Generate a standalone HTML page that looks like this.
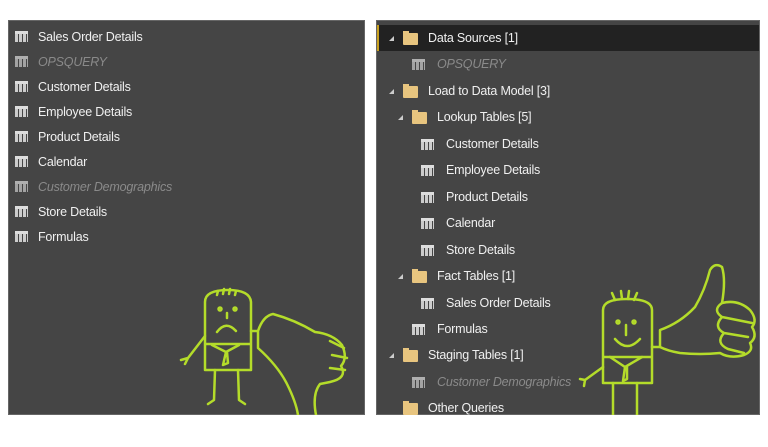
<!DOCTYPE html><html><head><style>
body{margin:0;width:768px;height:447px;background:#fff;position:relative;overflow:hidden;font-family:"Liberation Sans",sans-serif;}
.p{position:absolute;background:#454545;}
.r{position:absolute;height:20px;line-height:20px;font-size:12.5px;color:#f0f0f0;white-space:nowrap;letter-spacing:-0.2px;}
.r.i{color:#8a8a8a;font-style:italic;}
.t{position:absolute;width:13px;height:11px;background:
linear-gradient(#ddd,#ddd) 0 0/13px 3px no-repeat,
repeating-linear-gradient(90deg,#ccc 0 3px,#454545 3px 4px) 0 3px/13px 8px no-repeat;}
.f{position:absolute;width:15px;height:12px;background:#e8c57f;border-radius:1px;}
.f:before{content:"";position:absolute;left:0;top:-2px;width:6px;height:3px;background:#e8c57f;}
.a{position:absolute;width:0;height:0;border-left:5px solid transparent;border-bottom:5px solid #ccc;}
</style></head><body>
<div class="p" style="left:8px;top:20px;width:357px;height:395px;border:1px solid #666;box-sizing:border-box"></div>
<div class="p" style="left:376px;top:20px;width:384px;height:395px;border:1px solid #666;box-sizing:border-box"></div>

<div class="t" style="left:15px;top:31px"></div><div class="r" style="left:38px;top:27px">Sales Order Details</div>
<div class="t" style="left:15px;top:56px;opacity:.7"></div><div class="r i" style="left:38px;top:52px">OPSQUERY</div>
<div class="t" style="left:15px;top:81px"></div><div class="r" style="left:38px;top:77px">Customer Details</div>
<div class="t" style="left:15px;top:106px"></div><div class="r" style="left:38px;top:102px">Employee Details</div>
<div class="t" style="left:15px;top:131px"></div><div class="r" style="left:38px;top:127px">Product Details</div>
<div class="t" style="left:15px;top:156px"></div><div class="r" style="left:38px;top:152px">Calendar</div>
<div class="t" style="left:15px;top:181px;opacity:.7"></div><div class="r i" style="left:38px;top:177px">Customer Demographics</div>
<div class="t" style="left:15px;top:206px"></div><div class="r" style="left:38px;top:202px">Store Details</div>
<div class="t" style="left:15px;top:231px"></div><div class="r" style="left:38px;top:227px">Formulas</div>

<div style="position:absolute;left:377px;top:25px;width:382px;height:26px;background:#222"></div>
<div style="position:absolute;left:377px;top:25px;width:2px;height:26px;background:#c8a020"></div>
<div class="a" style="left:389px;top:36px"></div><div class="f" style="left:403px;top:33px"></div><div class="r" style="left:428px;top:28px">Data Sources [1]</div>
<div class="t" style="left:412px;top:59px;opacity:.7"></div><div class="r i" style="left:437px;top:54px">OPSQUERY</div>
<div class="a" style="left:389px;top:89px"></div><div class="f" style="left:403px;top:86px"></div><div class="r" style="left:428px;top:81px">Load to Data Model [3]</div>
<div class="a" style="left:398px;top:115px"></div><div class="f" style="left:412px;top:112px"></div><div class="r" style="left:437px;top:107px">Lookup Tables [5]</div>
<div class="t" style="left:421px;top:139px"></div><div class="r" style="left:446px;top:134px">Customer Details</div>
<div class="t" style="left:421px;top:165px"></div><div class="r" style="left:446px;top:160px">Employee Details</div>
<div class="t" style="left:421px;top:192px"></div><div class="r" style="left:446px;top:187px">Product Details</div>
<div class="t" style="left:421px;top:218px"></div><div class="r" style="left:446px;top:213px">Calendar</div>
<div class="t" style="left:421px;top:245px"></div><div class="r" style="left:446px;top:240px">Store Details</div>
<div class="a" style="left:398px;top:274px"></div><div class="f" style="left:412px;top:271px"></div><div class="r" style="left:437px;top:266px">Fact Tables [1]</div>
<div class="t" style="left:421px;top:298px"></div><div class="r" style="left:446px;top:293px">Sales Order Details</div>
<div class="t" style="left:412px;top:324px"></div><div class="r" style="left:437px;top:319px">Formulas</div>
<div class="a" style="left:389px;top:353px"></div><div class="f" style="left:403px;top:350px"></div><div class="r" style="left:428px;top:345px">Staging Tables [1]</div>
<div class="t" style="left:412px;top:377px;opacity:.7"></div><div class="r i" style="left:437px;top:372px">Customer Demographics</div>
<div class="f" style="left:403px;top:403px"></div><div class="r" style="left:428px;top:398px">Other Queries</div>

<!-- sad figure -->
<svg style="position:absolute;left:170px;top:270px" width="195" height="145" fill="none" stroke="#b4dc2a" stroke-width="2.5" stroke-linecap="round" stroke-linejoin="round">
<path d="M35 100 V32 Q35 20 58 20 Q80 20 81 32 V100 Z M35 74 H81"/>
<path d="M47 25 l1 -4 M53 24 l1 -5 M59 24 l1 -5 M65 25 l1 -4"/>
<circle cx="50" cy="39" r="1.5"/><circle cx="65" cy="39" r="1.5"/>
<path d="M57 43 v5 M47 62 Q56 50 66 61"/>
<path d="M42 75 L56 82 L69 75 M56 82 L53 95 L58 93 L57 82"/>
<path d="M35 66 L18 88 L11 90 M18 88 L15 94"/>
<path d="M45 100 L44 130 L38 134 M68 100 L69 130 L75 134"/>
<path d="M81 61 H88 Q93 46 103 44 Q125 50 145 62 Q163 64 172 75 Q178 88 171 96 Q178 108 160 112 L150 114 Q142 124 146 145 M88 61 V78 Q108 96 117 114 Q126 132 128 145"/>
<path d="M160 71 L174 78 M162 85 L177 88 M160 98 L175 100"/>
</svg>

<!-- happy figure -->
<svg style="position:absolute;left:570px;top:255px" width="190" height="160" fill="none" stroke="#b4dc2a" stroke-width="2.5" stroke-linecap="round" stroke-linejoin="round">
<path d="M33 128 V55 Q33 44 57 44 Q82 44 82 55 V128 Z M33 102 H82"/>
<path d="M45 45 l-3 -7 M52 44 l-1 -8 M58 44 l1 -8 M64 45 l3 -7"/>
<circle cx="48" cy="67" r="1.5"/><circle cx="64" cy="67" r="1.5"/>
<path d="M56 70 v10 M45 84 Q57 98 70 84"/>
<path d="M40 102 L55 112 L72 102 M55 112 L53 126 L57 124 L57 112"/>
<path d="M33 112 L15 125 L10 124 M15 125 L14 131"/>
<path d="M43 128 V160 M67 128 V160"/>
<path d="M82 92 H90 V75 Q110 68 125 52 Q135 35 140 15 Q145 7 152 12 Q156 25 152 48 Q168 44 180 55 Q188 65 182 72 Q188 82 180 88 Q184 96 174 100 Q160 104 150 98 Q130 100 110 98 Q98 96 90 92"/>
<path d="M152 48 Q142 55 152 62 L182 68 M152 62 Q143 72 154 78 L178 82 M154 78 Q145 88 158 94 L174 98"/>
</svg>
</body></html>
